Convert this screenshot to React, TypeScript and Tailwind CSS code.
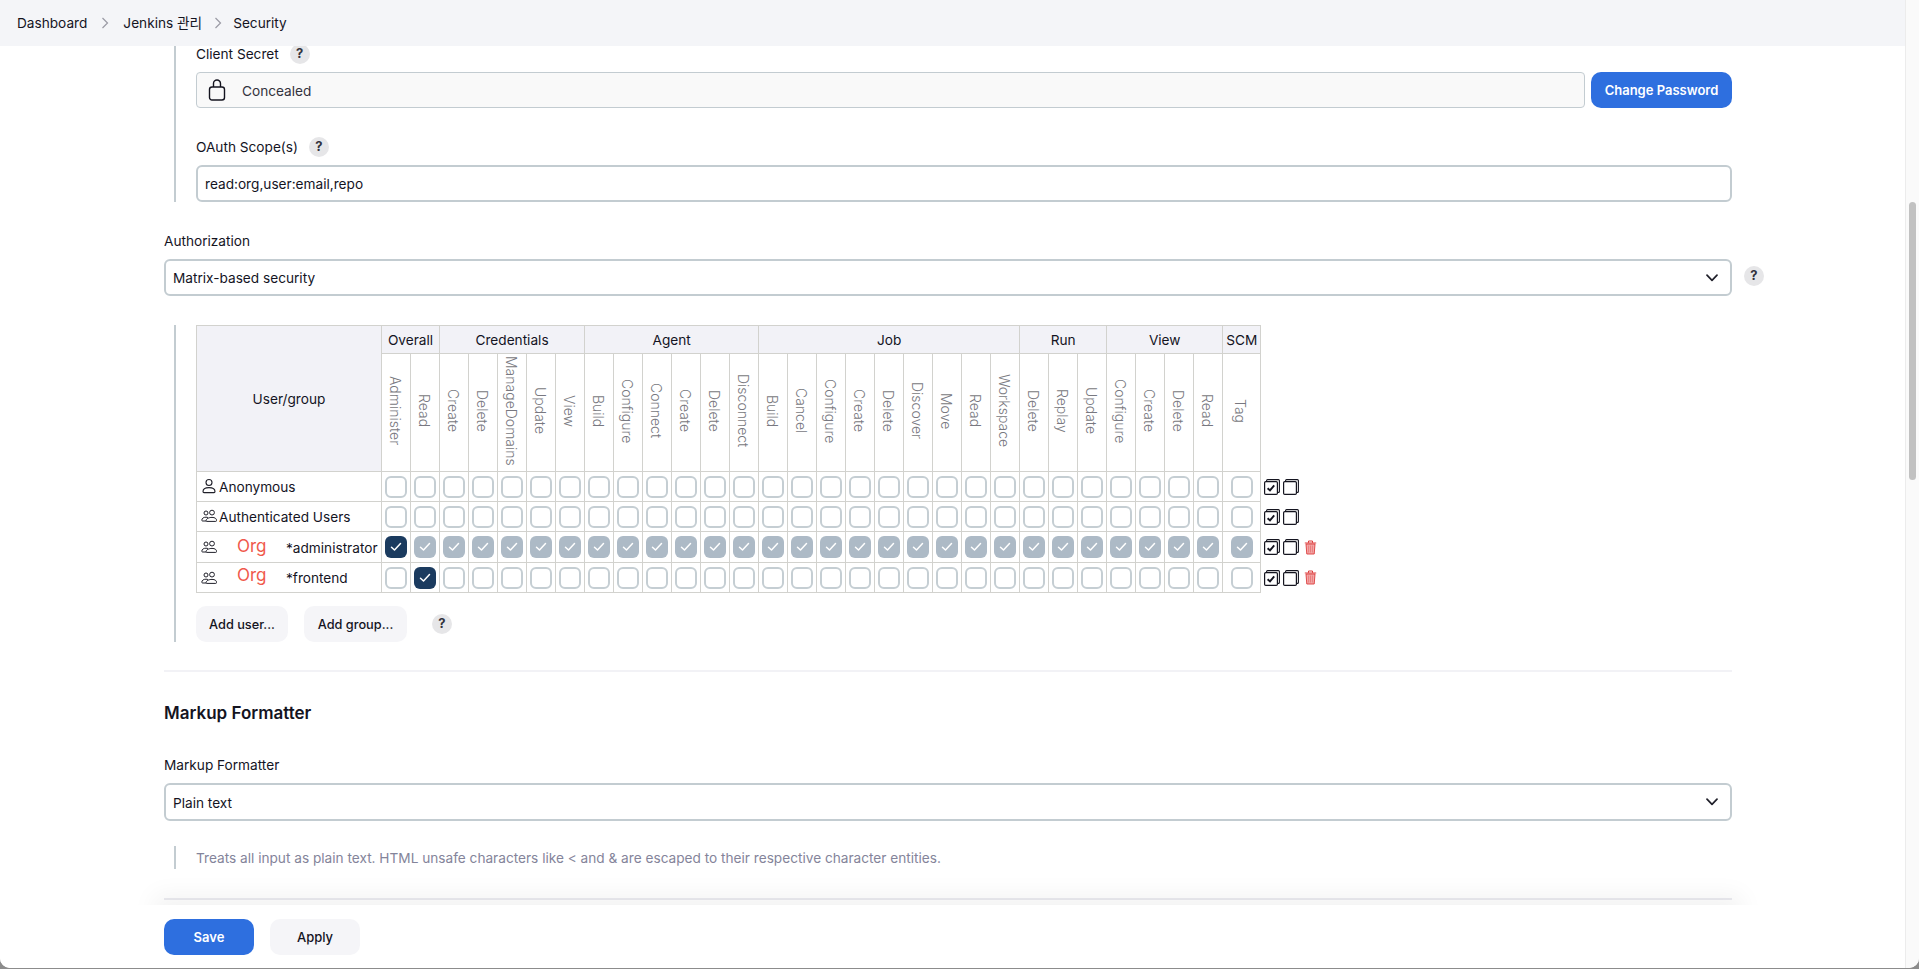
import React from 'react';

const groups: { name: string; perms: string[] }[] = [
  { name: 'Overall', perms: ['Administer', 'Read'] },
  { name: 'Credentials', perms: ['Create', 'Delete', 'ManageDomains', 'Update', 'View'] },
  { name: 'Agent', perms: ['Build', 'Configure', 'Connect', 'Create', 'Delete', 'Disconnect'] },
  { name: 'Job', perms: ['Build', 'Cancel', 'Configure', 'Create', 'Delete', 'Discover', 'Move', 'Read', 'Workspace'] },
  { name: 'Run', perms: ['Delete', 'Replay', 'Update'] },
  { name: 'View', perms: ['Configure', 'Create', 'Delete', 'Read'] },
  { name: 'SCM', perms: ['Tag'] },
];
const perms = groups.flatMap((g) => g.perms);

const Help = () => (
  <span className="flex h-[20px] w-[20px] shrink-0 items-center justify-center rounded-full bg-[#e6e6e8] text-[13px] font-bold text-[#33333d]">?</span>
);

const Chevron = () => (
  <svg width="12" height="8" viewBox="0 0 12 8" fill="none" stroke="#20202a" strokeWidth="1.7" strokeLinecap="round" strokeLinejoin="round">
    <path d="M1 1.2 6 6.4l5-5.2" />
  </svg>
);

const Select = ({ value, className }: { value: string; className: string }) => (
  <div className={`flex w-full items-center justify-between rounded-[6px] border-2 border-[#c3ccd1] bg-white pl-[7px] pr-[12px] text-[13.65px] text-[#14141f] ${className}`}>
    <span className="translate-y-[1px]">{value}</span>
    <Chevron />
  </div>
);

const PersonIcon = () => (
  <svg width="16" height="16" viewBox="0 0 16 16" fill="none" stroke="#20202a" strokeWidth="1.1" className="shrink-0">
    <circle cx="8" cy="4.5" r="3" />
    <path d="M2 13.6c0-2.8 3-4 6-4s6 1.2 6 4c0 .6-.4 1-1 1H3c-.6 0-1-.4-1-1z" />
  </svg>
);

const PeopleIcon = () => (
  <svg width="16" height="14" viewBox="0 0 16 14" fill="none" stroke="#20202a" strokeWidth="1" className="shrink-0">
    <circle cx="5" cy="4" r="2" />
    <circle cx="11" cy="3.6" r="2.4" />
    <path d="M.8 11.2c0-2 2-3 4.2-3 .8 0 1.5.1 2 .4" />
    <path d="M5 12c0-2.4 3-3.6 6-3.6s4.6 1.2 4.6 3.2c0 .4-.3.8-.8.8H5.6c-.3 0-.6-.1-.6-.4z" />
    <path d="M.8 11.2c0 .5.3.8.8.8H5" />
  </svg>
);

const AllIcon = ({ checked }: { checked: boolean }) => (
  <svg width="16" height="16" viewBox="0 0 16 16" fill="none" stroke="#14141f" strokeWidth="1.1" className="shrink-0">
    <path d="M2.6 2.6V1.6a1 1 0 0 1 1-1h10.8a1 1 0 0 1 1 1v10.8a1 1 0 0 1-1 1h-1" />
    <rect x=".6" y="2.6" width="12.8" height="12.8" rx="1.2" fill="#fff" strokeWidth="1.2" />
    {checked && <path d="M3.6 9.2 6 11.4l4.2-5" strokeWidth="1.9" />}
  </svg>
);

const TrashIcon = () => (
  <svg width="13" height="15" viewBox="0 0 13 15" className="shrink-0">
    <path d="M2 4h9l-.8 10H2.8z" fill="#f3a8a8" stroke="#dc3b3b" strokeWidth=".9" />
    <path d="M.8 3h11.4M4.5 2.8V1h4v1.8" fill="none" stroke="#dc3b3b" strokeWidth="1" />
    <path d="M4.6 5.5v7M6.5 5.5v7M8.4 5.5v7" stroke="#e56a6a" strokeWidth=".7" />
  </svg>
);

type Mark = 'off' | 'on' | 'implied';

const Box = ({ mark }: { mark: Mark }) => {
  if (mark === 'off') {
    return <span className="mx-auto block h-[22px] w-[22px] rounded-[6px] border-[2.5px] border-[#c5ced3] bg-white" />;
  }
  return (
    <span className={`mx-auto flex h-[22px] w-[22px] items-center justify-center rounded-[6px] ${mark === 'on' ? 'bg-[#1b3b5f]' : 'bg-[#adbac6]'}`}>
      <svg width="12" height="10" viewBox="0 0 12 10" fill="none" stroke="#fff" strokeWidth="1.5" strokeLinecap="round" strokeLinejoin="round">
        <path d="M1.5 5.2 4.5 8l6-6.4" />
      </svg>
    </span>
  );
};

const rows: { key: string; h: string; marks: (i: number) => Mark; remove: boolean; name: React.ReactNode }[] = [
  {
    key: 'anon',
    h: 'h-[30px]',
    marks: () => 'off',
    remove: false,
    name: (
      <div className="flex items-center gap-[2px] pl-[4px]">
        <PersonIcon />
        <span className="translate-y-[1px]">Anonymous</span>
      </div>
    ),
  },
  {
    key: 'auth',
    h: 'h-[30px]',
    marks: () => 'off',
    remove: false,
    name: (
      <div className="flex items-center gap-[2px] pl-[4px]">
        <PeopleIcon />
        <span className="translate-y-[1px]">Authenticated Users</span>
      </div>
    ),
  },
  {
    key: 'admin',
    h: 'h-[31px]',
    marks: (i) => (i === 0 ? 'on' : 'implied'),
    remove: true,
    name: (
      <div className="flex items-center pl-[4px]">
        <PeopleIcon />
        <span className="ml-[20px] w-[49px] text-[17px] text-[#f0594c]">Org</span>
        <span className="translate-y-[1px]">*administrator</span>
      </div>
    ),
  },
  {
    key: 'frontend',
    h: 'h-[30px]',
    marks: (i) => (i === 1 ? 'on' : 'off'),
    remove: true,
    name: (
      <div className="flex items-center pl-[4px]">
        <PeopleIcon />
        <span className="ml-[20px] w-[49px] -translate-y-[2px] text-[17px] text-[#f0594c]">Org</span>
        <span className="translate-y-[1px]">*frontend</span>
      </div>
    ),
  },
];

const cell = 'border border-[#d2d2ce] p-0';

const Matrix = () => (
  <div className="relative w-fit">
    <table className="w-[1064px] table-fixed border-collapse text-[13.65px] text-[#14141f]">
      <colgroup>
        <col className="w-[185px]" />
        {perms.map((_, i) => (
          <col key={i} className={i === perms.length - 1 ? 'w-[38px]' : 'w-[29px]'} />
        ))}
      </colgroup>
      <thead>
        <tr className="h-[28px]">
          <th rowSpan={2} className={`${cell} bg-[#f2f2f7] pt-px font-normal`}>User/group</th>
          {groups.map((g) => (
            <th key={g.name} colSpan={g.perms.length} className={`${cell} bg-[#f2f2f7] pt-px font-normal`}>{g.name}</th>
          ))}
        </tr>
        <tr className="h-[118px]">
          {perms.map((p, i) => (
            <th key={i} className={`${cell} text-[14px] font-light text-[#787880]`}>
              <span className="inline-block -translate-x-[1px] translate-y-[1px] leading-[29px] [writing-mode:vertical-rl]">{p}</span>
            </th>
          ))}
        </tr>
      </thead>
      <tbody>
        {rows.map((r) => (
          <tr key={r.key} className={r.h}>
            <td className={cell}>{r.name}</td>
            {perms.map((p, i) => (
              <td key={i} className={cell}><Box mark={r.marks(i)} /></td>
            ))}
            <td className="w-0 p-0">
              <div className="absolute left-[1068px] flex -translate-y-1/2 items-center gap-[3px]">
                <AllIcon checked />
                <AllIcon checked={false} />
                {r.remove && <span className="ml-[2px]"><TrashIcon /></span>}
              </div>
            </td>
          </tr>
        ))}
      </tbody>
    </table>
  </div>
);

export default function App() {
  return (
    <div className="h-screen w-full overflow-hidden bg-[#8c8c8c] pb-px font-['Inter','Noto_Sans_CJK_KR',sans-serif] text-[13.65px] text-[#14141f]">
      <div className="relative flex h-full overflow-hidden rounded-b-[10px] bg-white">
        <div className="flex min-w-0 flex-1 flex-col">
          {/* Breadcrumb bar */}
          <div className="flex h-[46px] shrink-0 items-center bg-[#f4f5f8] pl-[17px]">
            <span>Dashboard</span>
            <svg width="8" height="12" viewBox="0 0 8 12" fill="none" stroke="#9a9aa4" strokeWidth="1.2" className="ml-[14px] mr-[14px]"><path d="M1.5 1 6.5 6l-5 5" /></svg>
            <span>Jenkins 관리</span>
            <svg width="8" height="12" viewBox="0 0 8 12" fill="none" stroke="#9a9aa4" strokeWidth="1.2" className="ml-[12px] mr-[11px]"><path d="M1.5 1 6.5 6l-5 5" /></svg>
            <span>Security</span>
          </div>

          <div className="min-h-0 flex-1 overflow-hidden pl-[164px]">
            <div className="w-[1568px]">
              {/* Client settings, continued from above */}
              <div className="ml-[10px] h-[156px] border-l-2 border-[#c3ccd1] pl-[20px]">
                <div className="flex h-[16px] items-center gap-[11px]">
                  Client Secret <Help />
                </div>
                <div className="mt-[10px] flex gap-[6px]">
                  <div className="flex h-[36px] flex-1 items-center rounded-[4px] border border-[#c3ccd1] bg-[#f9f9f9] pl-[11px]">
                    <svg width="18" height="22" viewBox="0 0 18 22" fill="none" stroke="#14141f" strokeWidth="1.4">
                      <rect x="1.5" y="8" width="15" height="13" rx="2.5" />
                      <path d="M5.5 8V4.5a3.5 3.5 0 0 1 7 0V8" />
                    </svg>
                    <span className="ml-[16px] translate-y-[1px] text-[#33333d]">Concealed</span>
                  </div>
                  <button className="h-[36px] w-[141px] rounded-[10px] bg-[#2e6fdf] pt-px text-[13px] font-semibold text-white">Change Password</button>
                </div>
                <div className="mt-[29px] flex h-[20px] items-center gap-[11px]">
                  OAuth Scope(s) <Help />
                </div>
                <input
                  readOnly
                  value="read:org,user:email,repo"
                  className="mt-[8px] block h-[37px] w-full rounded-[6px] border-2 border-[#c3ccd1] bg-white pl-[7px] pt-px text-[13.65px] outline-none"
                />
              </div>

              <div className="mt-[29px] h-[20px] leading-[20px]">Authorization</div>
              <div className="relative mt-[8px]">
                <Select value="Matrix-based security" className="h-[37px]" />
                <span className="absolute left-[1580px] top-[7px]"><Help /></span>
              </div>

              {/* Permission matrix */}
              <div className="ml-[10px] mt-[29px] h-[317px] border-l-2 border-[#c3ccd1] pl-[20px]">
                <Matrix />
                <div className="mt-[13px] flex items-center">
                  <button className="h-[36px] w-[92px] rounded-[10px] bg-[#f5f5f8] pt-px text-[12.75px] font-medium">Add user...</button>
                  <button className="ml-[16px] h-[36px] w-[103px] rounded-[10px] bg-[#f5f5f8] pt-px text-[12.75px] font-medium">Add group...</button>
                  <span className="ml-[25px]"><Help /></span>
                </div>
              </div>

              <div className="mt-[28px] h-[2px] bg-[#f2f2f6]" />
              <h2 className="mt-[29px] h-[24px] text-[17px] font-semibold leading-[24px]">Markup Formatter</h2>
              <div className="mt-[30px] h-[20px] leading-[20px]">Markup Formatter</div>
              <Select value="Plain text" className="mt-[8px] h-[38px]" />
              <div className="ml-[10px] mt-[25px] flex h-[23px] items-center border-l-2 border-[#c3ccd1] pl-[20px] text-[#84849a]">
                <span className="translate-y-[1px]">Treats all input as plain text. HTML unsafe characters like &lt; and &amp; are escaped to their respective character entities.</span>
              </div>
              <div className="mt-[29px] h-[2px] bg-[#ebebf0]" />
            </div>
          </div>
        </div>

        {/* Scrollbar */}
        <div className="w-[14px] shrink-0 border-l border-[#ececec] bg-[#fafafa] pl-[3px] pt-[202px]">
          <div className="h-[278px] w-[7px] rounded-full bg-[#c1c1c1]" />
        </div>

        {/* Sticky save bar */}
        <div className="absolute bottom-0 left-0 right-[14px]">
          <div className="h-[32px] overflow-hidden">
            <div className="ml-[164px] mt-[32px] h-[32px] w-[1568px] shadow-[0_0_24px_10px_rgba(0,0,0,0.05)]" />
          </div>
          <div className="flex h-[63px] gap-[16px] bg-white pl-[164px] pt-[14px]">
            <button className="h-[36px] w-[90px] rounded-[10px] bg-[#2e6fdf] pt-px text-[13px] font-semibold text-white">Save</button>
            <button className="h-[36px] w-[90px] rounded-[10px] bg-[#f5f5f8] pt-px text-[13px] font-medium">Apply</button>
          </div>
        </div>
      </div>
    </div>
  );
}
